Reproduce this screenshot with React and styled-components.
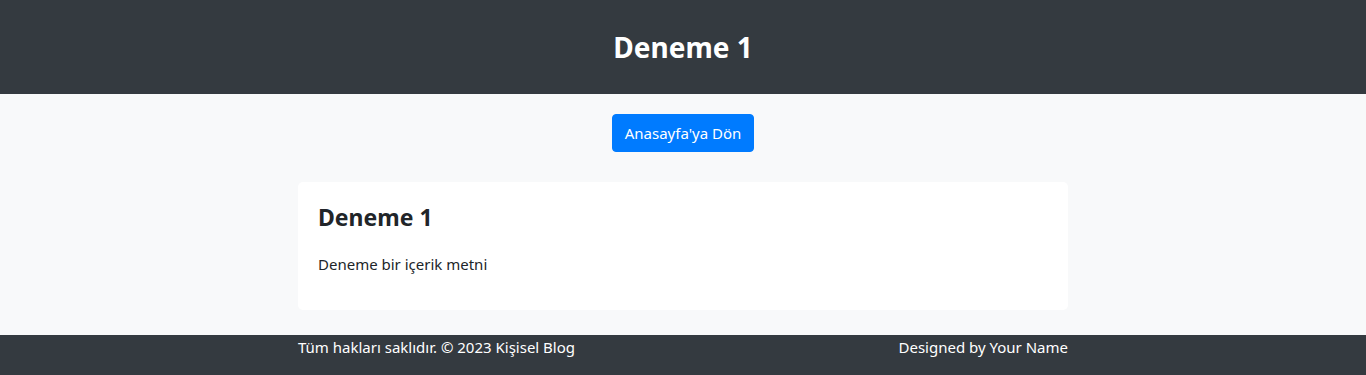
import styled, { createGlobalStyle } from "styled-components"

const GlobalStyle = createGlobalStyle`
    * { box-sizing : border-box; }
    body {
        margin : 0;
        font-family : "Noto Sans", "Segoe UI", Roboto, sans-serif;
        font-size : 15px;
        line-height : 24px;
        color : #212529;
        background : #f8f9fa;
    }
`;

const Header = styled.header`
    background-color : #343a40;
    color : white;
    text-align : center;
    padding : 28px 0;
`;

const HeaderTitle = styled.h1`
    margin : 0;
    font-size : 28px;
    font-weight : 700;
    line-height : 38px;
`;

const Main = styled.main`
    background-color : #f8f9fa;
    padding : 20px 0 25px;
`;

const Container = styled.div`
    width : 770px;
    margin : 0 auto;
`;

const Center = styled.div`
    text-align : center;
    margin-bottom : 30px;
`;

const Button = styled.a`
    display : inline-block;
    padding : 6px 12px;
    font-size : 15px;
    line-height : 24px;
    color : white;
    background-color : #007bff;
    border : 1px solid #007bff;
    border-radius : 4px;
    text-decoration : none;
    cursor : pointer;
`;

const Card = styled.article`
    background : white;
    border-radius : 5px;
    padding : 20px;
`;

const CardTitle = styled.h2`
    margin : 0 0 20px;
    font-size : 23px;
    font-weight : 700;
    line-height : 30px;
`;

const Text = styled.p`
    margin : 0 0 14px;
`;

const Footer = styled.footer`
    background-color : #343a40;
    color : white;
    padding-bottom : 16px;
`;

const FooterRow = styled(Container)`
    display : flex;
    justify-content : space-between;
`;

const App = () => {
  return (
    <>
      <GlobalStyle />
      <Header>
        <HeaderTitle>Deneme 1</HeaderTitle>
      </Header>
      <Main>
        <Container>
          <Center>
            <Button>Anasayfa'ya Dön</Button>
          </Center>
          <Card>
            <CardTitle>Deneme 1</CardTitle>
            <Text>Deneme bir içerik metni</Text>
          </Card>
        </Container>
      </Main>
      <Footer>
        <FooterRow>
          <span>Tüm hakları saklıdır. © 2023 Kişisel Blog</span>
          <span>Designed by Your Name</span>
        </FooterRow>
      </Footer>
    </>
  )
}

export default App
